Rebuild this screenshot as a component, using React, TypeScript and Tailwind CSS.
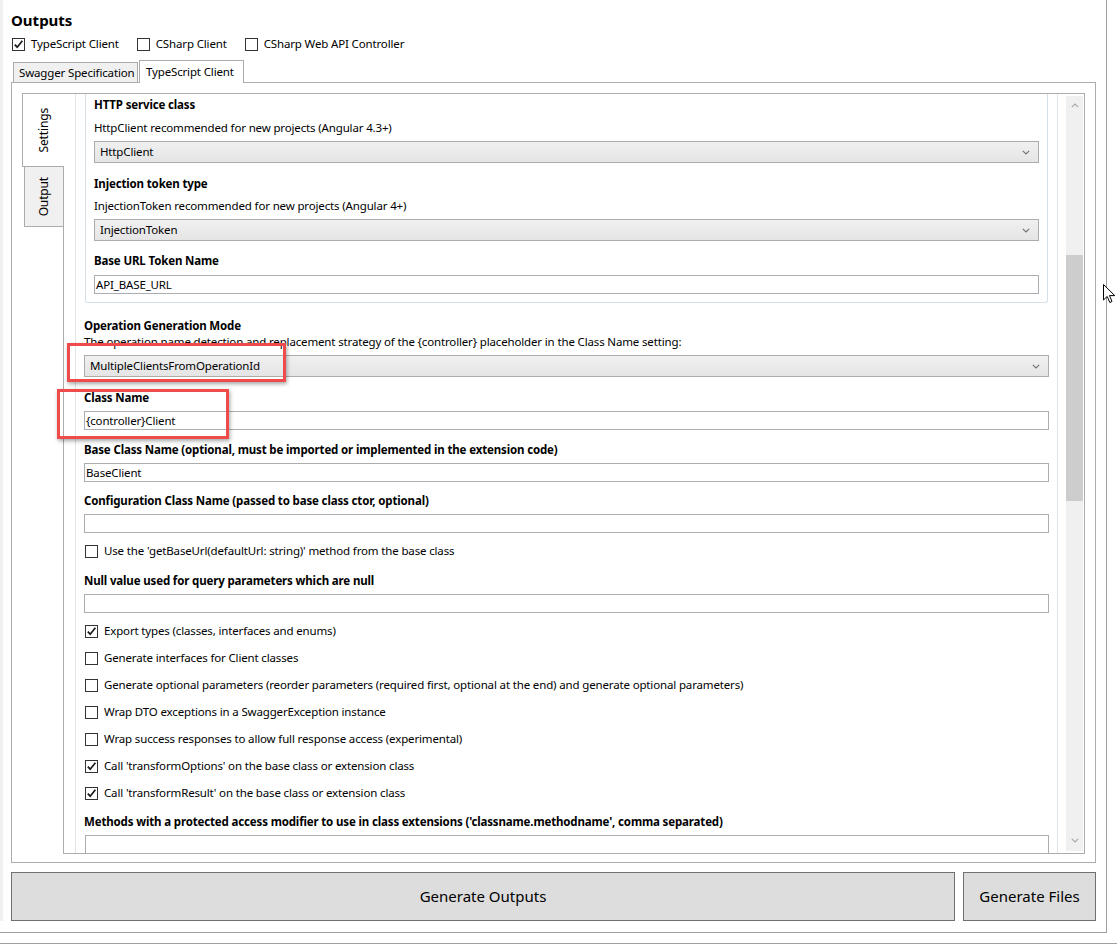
import React from "react";

const font = "font-['Noto_Sans',sans-serif]";

const Check = ({ checked }: { checked?: boolean }) => (
  <span className="w-[13px] h-[13px] border border-[#333333] bg-white flex items-center justify-center shrink-0">
    {checked && (
      <svg width="11" height="11" viewBox="0 0 11 11">
        <path d="M1.8 5.6 L4.2 8.2 L9.4 1.8" fill="none" stroke="#1a1a1a" strokeWidth="1.7" />
      </svg>
    )}
  </span>
);

const Label = ({ children, className = "" }: { children: React.ReactNode; className?: string }) => (
  <div className={`h-[16px] leading-[16px] font-bold whitespace-nowrap ${className}`}>{children}</div>
);

const Desc = ({ children, className = "" }: { children: React.ReactNode; className?: string }) => (
  <div className={`h-[16px] leading-[16px] whitespace-nowrap ${className}`}>{children}</div>
);

const Select = ({ value, className = "" }: { value: string; className?: string }) => (
  <div
    className={`h-[22px] border border-[#acacac] bg-linear-to-b from-[#f0f0f0] to-[#e5e5e5] flex items-center justify-between pl-[5px] pr-[8px] ${className}`}
  >
    <span className="leading-[16px]">{value}</span>
    <svg width="8" height="5" viewBox="0 0 8 5">
      <path d="M0.8 0.8 L4 3.9 L7.2 0.8" fill="none" stroke="#707070" strokeWidth="1.1" />
    </svg>
  </div>
);

const Input = ({ value = "", className = "" }: { value?: string; className?: string }) => (
  <div className={`h-[19px] border border-[#abadb3] bg-white flex items-center pl-[1px] ${className}`}>
    <span className="leading-[16px]">{value}</span>
  </div>
);

const CheckRow = ({ checked, text, className = "" }: { checked?: boolean; text: string; className?: string }) => (
  <div className={`h-[16px] flex items-center gap-[6px] ml-[1px] whitespace-nowrap ${className}`}>
    <Check checked={checked} />
    <span className="leading-[16px]">{text}</span>
  </div>
);

const options = [
  { checked: true, text: "Export types (classes, interfaces and enums)" },
  { checked: false, text: "Generate interfaces for Client classes" },
  {
    checked: false,
    text: "Generate optional parameters (reorder parameters (required first, optional at the end) and generate optional parameters)",
  },
  { checked: false, text: "Wrap DTO exceptions in a SwaggerException instance" },
  { checked: false, text: "Wrap success responses to allow full response access (experimental)" },
  { checked: true, text: "Call 'transformOptions' on the base class or extension class" },
  { checked: true, text: "Call 'transformResult' on the base class or extension class" },
];

export default function App() {
  return (
    <div
      className={`relative w-[1117px] h-[944px] bg-white overflow-hidden text-[11.5px] tracking-[-0.15px] text-black ${font}`}
    >
      <div className="flex h-[933px] w-[1107px] border-b border-[#a0a0a0]">
        <div className="w-[3px] h-[921px] bg-[#f0f0f0] shrink-0" />
        <div className="flex-1 border-r border-[#a0a0a0] pl-[8px] flex flex-col">
          <div className="pt-[10px] h-[30px] leading-[20px] text-[15px] tracking-normal font-bold">Outputs</div>

          <div className="mt-[6px] h-[16px] flex items-center ml-[1px]">
            <Check checked />
            <span className="ml-[6px]">TypeScript Client</span>
            <span className="ml-[18px]" />
            <Check />
            <span className="ml-[6px]">CSharp Client</span>
            <span className="ml-[18px]" />
            <Check />
            <span className="ml-[6px]">CSharp Web API Controller</span>
          </div>

          <div className="mt-[8px] h-[22px] flex items-end">
            <div className="ml-[2px] w-[125px] h-[20px] border border-b-0 border-[#acacac] bg-[#f0f0f0] flex items-center pl-[5px] whitespace-nowrap">
              Swagger Specification
            </div>
            <div className="ml-[1px] w-[105px] h-[23px] -mb-px relative z-10 border border-b-0 border-[#acacac] bg-white flex items-center pl-[6px] whitespace-nowrap">
              TypeScript Client
            </div>
          </div>

          <div className="w-[1085px] h-[781px] border border-[#acacac] pt-[10px] pl-[10px] pr-[10px] flex">
            <div className="w-[41px] flex flex-col relative z-10 shrink-0">
              <div className="w-[42px] h-[74px] border border-r-0 border-[#acacac] bg-white flex items-center justify-center">
                <span className="[writing-mode:vertical-rl] rotate-180 leading-[16px] text-[12px]">Settings</span>
              </div>
              <div className="ml-[2px] w-[39px] h-[61px] -mt-px border border-r-0 border-[#acacac] bg-[#f0f0f0] flex items-center justify-center">
                <span className="[writing-mode:vertical-rl] rotate-180 leading-[16px] text-[12px]">Output</span>
              </div>
            </div>

            <div className="w-[1022px] h-[761px] border border-[#acacac] overflow-hidden flex">
              <div className="flex-1 min-w-0 pl-[11px] pr-[8px]">
                <div className="h-full border-x border-[#dde4ea] px-[8px] overflow-hidden">
                  <div className="mx-[1px] border-x border-b border-[#d5dfe5] rounded-b-[3px] px-[8px] pt-[3px] pb-[8px]">
                    <Label>HTTP service class</Label>
                    <Desc className="mt-[7px]">HttpClient recommended for new projects (Angular 4.3+)</Desc>
                    <Select className="mt-[5px]" value="HttpClient" />
                    <Label className="mt-[13px]">Injection token type</Label>
                    <Desc className="mt-[6px]">InjectionToken recommended for new projects (Angular 4+)</Desc>
                    <Select className="mt-[5px]" value="InjectionToken" />
                    <Label className="mt-[12px]">Base URL Token Name</Label>
                    <Input className="mt-[6px]" value="API_BASE_URL" />
                  </div>

                  <Label className="mt-[15px]">Operation Generation Mode</Label>
                  <Desc className="mt-0">
                    The operation name detection and replacement strategy of the {"{controller}"} placeholder in the Class
                    Name setting:
                  </Desc>
                  <Select className="mt-[5px]" value="MultipleClientsFromOperationId" />

                  <Label className="mt-[13px]">Class Name</Label>
                  <Input className="mt-[5px]" value="{controller}Client" />

                  <Label className="mt-[12px]">
                    Base Class Name (optional, must be imported or implemented in the extension code)
                  </Label>
                  <Input className="mt-[5px]" value="BaseClient" />

                  <Label className="mt-[11px]">Configuration Class Name (passed to base class ctor, optional)</Label>
                  <Input className="mt-[5px]" />

                  <CheckRow className="mt-[10px]" text="Use the 'getBaseUrl(defaultUrl: string)' method from the base class" />

                  <Label className="mt-[14px]">Null value used for query parameters which are null</Label>
                  <Input className="mt-[5px]" />

                  <div className="mt-[10px] flex flex-col gap-[11px]">
                    {options.map((o) => (
                      <CheckRow key={o.text} checked={o.checked} text={o.text} />
                    ))}
                  </div>

                  <Label className="mt-[13px]">
                    Methods with a protected access modifier to use in class extensions ('classname.methodname', comma
                    separated)
                  </Label>
                  <Input className="mt-[5px] ml-[1px] h-[30px]" />
                </div>
              </div>

              <div className="w-[17px] mr-[1px] py-[2px] shrink-0">
                <div className="h-full bg-[#f0f0f0] flex flex-col items-center">
                  <svg className="mt-[7px]" width="8" height="5" viewBox="0 0 8 5">
                    <path d="M0.8 4.2 L4 1 L7.2 4.2" fill="none" stroke="#a6a6a6" strokeWidth="1.1" />
                  </svg>
                  <div className="mt-[147px] w-full h-[246px] bg-[#cdcdcd]" />
                  <div className="flex-1" />
                  <svg className="mb-[8px]" width="8" height="5" viewBox="0 0 8 5">
                    <path d="M0.8 0.8 L4 4 L7.2 0.8" fill="none" stroke="#a6a6a6" strokeWidth="1.1" />
                  </svg>
                </div>
              </div>
            </div>
          </div>

          <div className="mt-[9px] flex gap-[8px] text-[15px] tracking-normal">
            <button className="w-[944px] h-[49px] border border-[#707070] bg-[#dddddd] flex items-center justify-center">
              Generate Outputs
            </button>
            <button className="w-[133px] h-[49px] border border-[#707070] bg-[#dddddd] flex items-center justify-center">
              Generate Files
            </button>
          </div>
        </div>
      </div>
      <div className="mt-[10px] h-px bg-[#a0a0a0]" />

      {/* annotation boxes */}
      <div className="absolute left-[67px] top-[343px] w-[219px] h-[39px] border-[3px] border-[#f04b4b] shadow-[1px_2px_4px_rgba(0,0,0,0.35)]" />
      <div className="absolute left-[57px] top-[389px] w-[172px] h-[50px] border-[3px] border-[#f04b4b] shadow-[1px_2px_4px_rgba(0,0,0,0.35)]" />

      {/* mouse pointer */}
      <svg className="absolute left-[1103px] top-[284px]" width="13" height="20" viewBox="0 0 13 20">
        <path d="M0.5 0.5 L0.5 16 L4.2 12.4 L6.8 18.5 L9 17.5 L6.5 11.6 L11.8 11.6 Z" fill="#fff" stroke="#000" strokeWidth="1" />
      </svg>
    </div>
  );
}
